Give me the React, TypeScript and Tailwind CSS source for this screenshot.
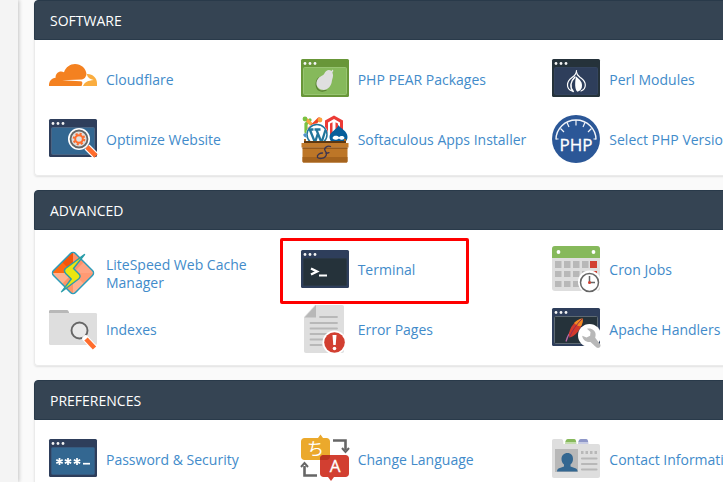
import type { ReactNode } from "react";

interface IFeature {
  title: string;
  icon: ReactNode;
  highlighted?: boolean;
}

interface IFeatureGroup {
  title: string;
  features: IFeature[];
}

function IconBase({ children }: { readonly children: ReactNode }) {
  return (
    <svg
      viewBox="0 0 48 48"
      width={48}
      height={48}
      className="shrink-0 overflow-visible"
      aria-hidden="true"
    >
      {children}
    </svg>
  );
}

// browser window used by most of the cPanel icons, 48x38
function AppWindow({
  frame,
  screen,
  edge,
  y = 3,
  children,
}: {
  readonly frame: string;
  readonly screen: string;
  readonly edge: string;
  readonly y?: number;
  readonly children?: ReactNode;
}) {
  return (
    <IconBase>
      <g transform={`translate(0 ${y})`}>
        <rect width="48" height="38" rx="1.5" fill={frame} />
        <circle cx="4" cy="4.5" r="1.4" fill="#f4f4f4" />
        <circle cx="9" cy="4.5" r="1.4" fill="#f4f4f4" />
        <circle cx="14" cy="4.5" r="1.4" fill="#f4f4f4" />
        <rect x="2.5" y="8.5" width="43" height="27" rx="1" fill={screen} stroke={edge} />
        {children}
      </g>
    </IconBase>
  );
}

const CloudflareIcon = () => (
  <IconBase>
    <path
      d="M0 30c-.3-5 2.700-8 6.600-8.300C6.200 17 11 13.800 15 16.200 17 11 21 8 26 8c6 0 11 4.200 11.500 10-.4 2.200-1 4.500-2 6.500L33 30z"
      fill="#f48120"
    />
    <path d="M37.300 18c5.500-.9 10.700 3.500 10.700 9v3H34l1.500-4.500z" fill="#faad3f" />
    <path
      d="M13 24.300l20-.7c2.500-.6 4-2.600 4.800-5.800.7 3.700 2.200 5.200 7 6.200-6 .6-9 2-11 6h-1.300c1.500-3 1-4.600-1-4.700z"
      fill="#fff"
    />
  </IconBase>
);

const OptimizeIcon = () => (
  <AppWindow frame="#2e3e5b" screen="#336791" edge="#4a6584">
    <path d="M38 28l8 8" stroke="#fff" strokeWidth="7" />
    <circle cx="30" cy="20" r="11" fill="#fff" />
    <circle cx="30" cy="20" r="8.500" fill="#dedede" stroke="#666" strokeWidth="1.800" />
    <path d="M38 28l9 9" stroke="#ff6c2c" strokeWidth="4.600" />
    <circle cx="30" cy="20" r="3.800" fill="none" stroke="#ff6c2c" strokeWidth="2" />
    <circle
      cx="30"
      cy="20"
      r="5.300"
      fill="none"
      stroke="#ff6c2c"
      strokeWidth="2"
      strokeDasharray="2.100 2.060"
    />
  </AppWindow>
);

const PearIcon = () => (
  <AppWindow frame="#689638" screen="#86b95b" edge="#98c472">
    <path
      d="M18.500 18.500c-4.500 3-4.500 10.500 0 13 3 1.200 5 .5 7-.5"
      fill="none"
      stroke="#587f32"
      strokeWidth="1.200"
    />
    <path
      d="M31.500 10.500l1 1.500c-1 .8-1.300 1.600-.8 2.600 1 2.600-.3 4.700-.8 7.200-.3 5.500-4.700 10-9.900 9-5.200-1-7-6.300-4.300-10.500 2-3.200 5.500-3.300 6.800-6 1.200-3 4.500-4.500 7-2.300z"
      fill="#dfdfdf"
    />
  </AppWindow>
);

const PerlIcon = () => (
  <AppWindow frame="#25323a" screen="#2e3e5b" edge="#34445f">
    <g fill="none" stroke="#fff" strokeLinecap="round">
      <path
        d="M24.500 11.500c0 4-1.800 5-4.500 7-3 2.200-4.500 4.800-4.500 7.500 0 3 1.500 5 4.500 6"
        strokeWidth="1.200"
      />
      <path d="M23 18c-4.500 4.500-5.500 10-1.800 14.500" strokeWidth="1.600" />
      <path
        d="M24.500 13c0 3 2 4 4.500 6 3 2.300 4.300 4.500 4.300 7 0 3-1.500 5-4.300 6"
        strokeWidth="1.200"
      />
    </g>
    <path d="M24 17.500c4.500 3.500 6 6 6 9s-1.500 5.500-4.500 6.200c-2.500-1.500-3-8-1.500-15.200z" fill="#fff" />
  </AppWindow>
);

const SoftaculousIcon = () => (
  <IconBase>
    <g transform="translate(0 -1)">
      <g fill="none" strokeWidth="3.200" strokeLinecap="round">
        <path d="M5 17V9l4-4" stroke="#7ac143" />
        <path d="M6 5l10 10" stroke="#f9a541" />
        <path d="M18 4L8 14" stroke="#f44321" />
        <path d="M4 20l7 4" stroke="#5091cd" />
      </g>
      <circle cx="4" cy="4" r="2.400" fill="#7ac143" />
      <circle cx="19" cy="5" r="2.400" fill="#f9a541" />
      <path d="M33 .5l9 5v11l-3 2v-11l-6-3.500-6 3.500v11l-3-2v-11z" fill="#ec3b36" />
      <path d="M29 8.500l2.500-1.300v12L33 20l1.500-.8v-12L37 8.500V22h-8z" fill="#ec3b36" />
      <circle cx="16" cy="19.500" r="11" fill="#fff" />
      <circle cx="16" cy="19.500" r="10" fill="none" stroke="#21759b" strokeWidth="1.500" />
      <path
        d="M7.500 14.500h5M9 15l5 12.500L17 18M13.500 14.500h6M15.500 15l5 12.500L24.500 15"
        fill="none"
        stroke="#21759b"
        strokeWidth="2.300"
      />
      <path
        d="M37.500 10c1.500 3.500 9 5.500 9 12 0 4.500-4 7-9 7s-9-2.500-9-7c0-5.500 8-7.500 9-12z"
        fill="#075e9b"
      />
      <path
        d="M31.500 23c1-3 5-2.500 6.500-.8 1.500-1.700 5-1.700 5.500.8-1 2.700-4 1.700-5.500.4-2 1.400-5.500 2-6.500-.4z"
        fill="#fff"
      />
      <path d="M3 24h2v3H3zM43 24h2v3h-2z" fill="#b06a22" />
      <path d="M3 26h42v2H3z" fill="#5e3811" />
      <path d="M.5 28h47v4.500H.5z" fill="#c17a2c" />
      <path
        d="M1.500 32.500h45V46c0 1-.6 1.500-1.500 1.500H3c-1 0-1.500-.5-1.500-1.500z"
        fill="#bd7627"
      />
      <path d="M1.500 32.500h45v1.300h-45z" fill="#8a5118" />
      <path d="M1.500 42h45v4c0 1-.6 1.500-1.500 1.500H3c-1 0-1.500-.5-1.500-1.500z" fill="#a5631d" />
      <path
        d="M29.500 31.500c-3-1.200-7 1.500-5.500 4 1.400 2 2.500 3.500.5 6-2 2.300-6 2.600-8 1-1-2.500 2.500-4.500 5-4.500M25 38.500l3-.8"
        fill="none"
        stroke="#3b3552"
        strokeWidth="1.300"
        strokeLinecap="round"
      />
    </g>
  </IconBase>
);

const SelectPhpIcon = () => (
  <IconBase>
    <circle cx="24" cy="23" r="24" fill="#2b5797" />
    <path d="M4 23.500a20 19.500 0 0 1 40 0" fill="none" stroke="#f2f5fa" strokeWidth="1.400" />
    <path
      d="M24 4v5.500M15 6.500l2 4.500M33 6.500L31 11M8.500 12.500l3.500 3.500M39.500 12.500L36 16M4 23h2.500M44 23h-2.500"
      stroke="#f2f5fa"
      strokeWidth="1.200"
    />
    <text
      x="24"
      y="35"
      textAnchor="middle"
      fontFamily="'Open Sans', sans-serif"
      fontSize="17"
      fill="#fff"
      stroke="#fff"
      strokeWidth=".3"
    >
      PHP
    </text>
  </IconBase>
);

const LiteSpeedIcon = () => (
  <IconBase>
    <clipPath id="litespeed-tile">
      <rect x="8.500" y="7.500" width="31" height="31" rx="3.500" transform="rotate(45 24 23)" />
    </clipPath>
    <g clipPath="url(#litespeed-tile)">
      <path d="M0 0h48v48H0z" fill="#ffb08f" />
      <path d="M0 23V0h24v23z" fill="#ff6a13" />
      <path d="M24 0v23L12 11z" fill="#f4550b" />
      <path d="M24 0h24v23H24z" fill="#ff9068" />
      <path d="M36 11l12 12H24z" fill="#ffa482" />
      <path d="M24 23h24L36 35z" fill="#ff9a73" />
      <path d="M24 23v25L12 35z" fill="#ff9467" />
    </g>
    <rect
      x="8.500"
      y="7.500"
      width="31"
      height="31"
      rx="3.500"
      transform="rotate(45 24 23)"
      fill="none"
      stroke="#2a9dbb"
      strokeWidth="1.500"
    />
    <path
      d="M35.500 4.500L16.500 18.500c-1.500 1.600-1.300 3.300.2 4.900l5.500 5.600-9.700 12.800 17-12.800c2-1.600 2-3.400.5-5l-5.500-5.500z"
      fill="#eae610"
      stroke="#2a9dab"
      strokeWidth="1.400"
      strokeLinejoin="round"
    />
  </IconBase>
);

const TerminalIcon = () => (
  <AppWindow frame="#2e3e5b" screen="#25323a" edge="#2a3845" y={4}>
    <path d="M10 18.500l6 3-6 3" fill="none" stroke="#fff" strokeWidth="2.400" />
    <path d="M18 25.500h8" stroke="#fff" strokeWidth="2" />
  </AppWindow>
);

const CronIcon = () => (
  <IconBase>
    <rect width="48" height="45" rx="3" fill="#dedede" />
    <path d="M0 12V3a3 3 0 0 1 3-3h42a3 3 0 0 1 3 3v9z" fill="#86b95b" />
    <circle cx="6.500" cy="6" r="1.900" fill="#fff" />
    <circle cx="41.500" cy="6" r="1.900" fill="#fff" />
    {[15, 25, 35].map((y) =>
      [3, 12, 21, 30, 38].map((x) => (
        <rect
          key={`${x}-${y}`}
          x={x}
          y={y}
          width={x === 38 ? 7 : 6.5}
          height={y === 15 ? 7 : 6}
          fill={x === 38 && y < 35 ? "#d23f31" : "#b8b8b8"}
        />
      ))
    )}
    <circle cx="37.500" cy="36" r="11.500" fill="#fff" />
    <circle cx="37.500" cy="36.500" r="9" fill="#fff" stroke="#666" strokeWidth="1.500" />
    <path d="M37.500 30v6.500H43" fill="none" stroke="#666" strokeWidth="1.500" />
    <circle cx="37.500" cy="36.500" r="1.500" fill="#d23f31" />
  </IconBase>
);

const IndexesIcon = () => (
  <IconBase>
    <path d="M0 8V5.500C0 4.500.6 4 1.500 4H18c1 0 2 1.500 2.300 4z" fill="#b8b8b8" />
    <path
      d="M0 7h46.500c1 0 1.500.6 1.500 1.500v29c0 .9-.6 1.500-1.500 1.500h-45C.6 39 0 38.400 0 37.500z"
      fill="#dedede"
    />
    <circle cx="30.500" cy="24.500" r="8" fill="#e9e9e9" stroke="#666" strokeWidth="1.900" />
    <path d="M36.500 32.500l8.500 9" stroke="#fff" strokeWidth="6.500" strokeLinecap="round" />
    <path d="M37 33l8.500 9" stroke="#ff6c2c" strokeWidth="4.600" />
  </IconBase>
);

const ErrorPagesIcon = () => (
  <IconBase>
    <path
      d="M14-1h27c1.300 0 2 .7 2 2v44c0 1.300-.7 2-2 2H5c-1.300 0-2-.7-2-2V11z"
      fill="#dedede"
    />
    <path d="M15-1v12.500H3.500z" fill="#b8b8b8" />
    <path
      d="M19 11h17M9.500 17h26.500M9.500 22.500h26.500M9.500 28h22M9.500 33.500h12M9.500 39h11"
      stroke="#b8b8b8"
      strokeWidth="1.800"
      strokeLinecap="round"
    />
    <circle cx="33.500" cy="36.500" r="12" fill="#fff" />
    <circle cx="33.500" cy="36.500" r="10.300" fill="#d23f31" />
    <path d="M31.500 29h4l-.8 10h-2.400z" fill="#fff" />
    <circle cx="33.500" cy="42.500" r="1.800" fill="#fff" />
  </IconBase>
);

const ApacheIcon = () => (
  <AppWindow frame="#2e3e5b" screen="#25323a" edge="#5d6972" y={2}>
    <path d="M14 33.500c1-4 3-8 6.500-12" fill="none" stroke="#b76ba9" strokeWidth="1.200" />
    <path
      d="M30.500 10.500c1 3-1 8-3.500 11.500-2.500 4-6 7-10 7.500-.5-5 1-9.500 4.500-13.500 2.500-3 6-5 9-5.500z"
      fill="#d3392b"
    />
    <path d="M22 15c3-3 6-4.500 8.500-4.500.8 2.500-.2 5-1.300 7.500-2.500.5-5-.5-7.200-3z" fill="#f18a22" />
    <path d="M17.500 29c3-7 7-12.500 12.500-18" fill="none" stroke="#8d2b57" strokeWidth="1" />
    <circle cx="37.500" cy="27.500" r="11.500" fill="#fff" />
    <path
      d="M35 20.700c4-1.200 8.500 1.500 8.600 5.500.1 2-.4 3-.4 3.600l5 6.500c1.300 2.500-1.500 4.700-3.700 3.200L38.500 34c-4.500.5-8-2.200-8.300-6.200l4.300 1.700 3.600-1.700.4-3.800z"
      fill="#b8b8b8"
    />
  </AppWindow>
);

const PasswordIcon = () => (
  <AppWindow frame="#2e3e5b" screen="#336791" edge="#365a80">
    {[10.5, 19, 28].map((x) => (
      <path
        key={x}
        d={`M${x} 19v7M${x - 3.2} 20.700l6.400 3.600M${x + 3.2} 20.700l-6.400 3.600`}
        stroke="#fff"
        strokeWidth="1.700"
      />
    ))}
    <path d="M34 24.700h7" stroke="#fff" strokeWidth="1.700" />
  </AppWindow>
);

const LanguageIcon = () => (
  <IconBase>
    <path
      d="M3.500 2H17l2.500-3.500L22 2h3.500C27.500 2 29 3.500 29 5.500v15c0 2-1.500 3.500-3.500 3.500h-22C1.500 24 0 22.500 0 20.500v-15C0 3.500 1.500 2 3.500 2z"
      fill="#eba92c"
    />
    <path
      d="M22.500 19h22c2 0 3.500 1.500 3.500 3.500v15c0 2-1.500 3.500-3.500 3.500H33l-3 4-3-4h-4.500c-2 0-3.500-1.500-3.500-3.500v-15c0-2 1.500-3.500 3.500-3.500z"
      fill="#d23f31"
    />
    <path d="M19 24v-1.500c0-2 1.500-3.500 3.500-3.500H29v1.500c0 2-1.500 3.500-3.500 3.500z" fill="#b9341f" />
    <text
      x="14.500"
      y="19"
      textAnchor="middle"
      fontFamily="'Noto Sans CJK JP', sans-serif"
      fontSize="17"
      fill="#fff"
    >
      ち
    </text>
    <text
      x="34"
      y="36"
      textAnchor="middle"
      fontFamily="'Open Sans', sans-serif"
      fontSize="17"
      fill="#fff"
      stroke="#fff"
      strokeWidth=".3"
    >
      A
    </text>
    <path d="M32 4.500h12.500V14M16 39.500H3.500V30" fill="none" stroke="#666" strokeWidth="2.600" />
    <path d="M41 12l3.500 4 3.500-4M0 31l3.500-4L7 31" fill="none" stroke="#666" strokeWidth="2" />
  </IconBase>
);

const ContactIcon = () => (
  <IconBase>
    <path d="M13 8c.2-3 1-5 3-5h6c2 0 2.200 2 2.500 5z" fill="#86b95b" />
    <path d="M26 8c.2-3 1-5 3-5h5c2 0 2.200 2 2.500 5z" fill="#8e97c8" />
    <path
      d="M2 3h7c2 0 2.300 1.500 2.500 5H46c1.300 0 2 .7 2 2v30c0 1.300-.7 2-2 2H2c-1.300 0-2-.7-2-2V5c0-1.300.7-2 2-2z"
      fill="#dedede"
    />
    <path d="M11.500 7H48" stroke="#fff" strokeWidth="1" />
    <rect x="3" y="13" width="23" height="23" fill="#b8b8b8" />
    <path
      d="M15.500 17c3.500 0 5.500 2.500 5.500 6 0 2.500-1 4.300-2.500 5.500v2l5.500 2c1 .5 1.500 1.500 1.500 3H5c0-1.500.6-2.500 1.500-3l5.500-2v-2c-1.500-1.200-2.500-3-2.500-5.500 0-3.500 2.500-6 6-6z"
      fill="#336791"
    />
    <path d="M29 16.500h17" stroke="#b8b8b8" strokeWidth="3" strokeDasharray="2.500 2" />
    <path
      d="M30 22.500h14.500M30 28h14.500M30 33.500h14.500"
      stroke="#b8b8b8"
      strokeWidth="2.200"
      strokeLinecap="round"
    />
  </IconBase>
);

const groups: IFeatureGroup[] = [
  {
    title: "SOFTWARE",
    features: [
      { title: "Cloudflare", icon: <CloudflareIcon /> },
      { title: "PHP PEAR Packages", icon: <PearIcon /> },
      { title: "Perl Modules", icon: <PerlIcon /> },
      { title: "Optimize Website", icon: <OptimizeIcon /> },
      { title: "Softaculous Apps Installer", icon: <SoftaculousIcon /> },
      { title: "Select PHP Version", icon: <SelectPhpIcon /> },
    ],
  },
  {
    title: "ADVANCED",
    features: [
      { title: "LiteSpeed Web Cache Manager", icon: <LiteSpeedIcon /> },
      { title: "Terminal", icon: <TerminalIcon />, highlighted: true },
      { title: "Cron Jobs", icon: <CronIcon /> },
      { title: "Indexes", icon: <IndexesIcon /> },
      { title: "Error Pages", icon: <ErrorPagesIcon /> },
      { title: "Apache Handlers", icon: <ApacheIcon /> },
    ],
  },
  {
    title: "PREFERENCES",
    features: [
      { title: "Password & Security", icon: <PasswordIcon /> },
      { title: "Change Language", icon: <LanguageIcon /> },
      { title: "Contact Information", icon: <ContactIcon /> },
    ],
  },
];

function FeatureLink({ feature }: { readonly feature: IFeature }) {
  return (
    <div className="relative">
      <a href="#" className="flex items-center gap-[9px] text-[#428bca] hover:underline">
        {feature.icon}
        <span className="py-[10px] pr-4">{feature.title}</span>
      </a>
      {feature.highlighted && (
        <div className="pointer-events-none absolute -top-2 -left-[21px] h-[66px] w-[189px] rounded-xs border-3 border-[#fe0000]" />
      )}
    </div>
  );
}

function FeaturePanel({ group }: { readonly group: IFeatureGroup }) {
  return (
    <section className="rounded-sm shadow-[0_1px_2px_rgba(0,0,0,0.1)]">
      <h2 className="flex h-10 items-center rounded-t-sm border border-[#293a4a] bg-[#354453] px-[15px] pt-[2px] text-white">
        {group.title}
      </h2>
      <div className="grid auto-rows-[48px] grid-cols-3 items-start gap-y-3 rounded-b-sm border border-t-0 border-[#ebebeb] bg-white px-[14px] pt-4 pb-[11px]">
        {group.features.map((feature) => (
          <FeatureLink key={feature.title} feature={feature} />
        ))}
      </div>
    </section>
  );
}

export default function App() {
  return (
    <div className="flex h-screen overflow-hidden bg-[#fafafa] font-['Open_Sans',sans-serif] text-sm leading-[18px]">
      <aside className="w-[18px] shrink-0 bg-[#f4f4f4] shadow-[1px_0_4px_rgba(0,0,0,0.22)]" />
      <main className="flex min-w-[801px] flex-1 flex-col gap-[14px] pl-4">
        {groups.map((group) => (
          <FeaturePanel key={group.title} group={group} />
        ))}
      </main>
    </div>
  );
}
